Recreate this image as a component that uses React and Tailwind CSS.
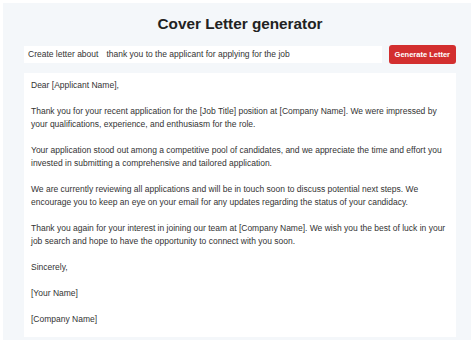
import React from 'react';

const paragraphs = [
    'Dear [Applicant Name],',
    'Thank you for your recent application for the [Job Title] position at [Company Name]. We were impressed by your qualifications, experience, and enthusiasm for the role.',
    'Your application stood out among a competitive pool of candidates, and we appreciate the time and effort you invested in submitting a comprehensive and tailored application.',
    'We are currently reviewing all applications and will be in touch soon to discuss potential next steps. We encourage you to keep an eye on your email for any updates regarding the status of your candidacy.',
    'Thank you again for your interest in joining our team at [Company Name]. We wish you the best of luck in your job search and hope to have the opportunity to connect with you soon.',
    'Sincerely,',
    '[Your Name]',
    '[Company Name]',
];

export default function App() {
    return (
        <div className="w-[474px] h-[342px] bg-white p-[3px] overflow-hidden" style={{ fontFamily: '"Liberation Sans", Arial, sans-serif' }}>
            <div className="h-[337px] bg-[#f4f7fa] pl-[21px] pr-[15px] pt-[11px]">
                <h1 className="text-center text-[15.3px] leading-[20px] font-bold text-[#222]">Cover Letter generator</h1>
                <div className="flex items-center mt-[11px] gap-[7px]">
                    <div className="flex-1 flex items-center h-[17px] bg-white px-[4px] text-[8.5px] text-[#333]">
                        <span>Create letter about</span>
                        <span className="ml-[8px]">thank you to the applicant for applying for the job</span>
                    </div>
                    <button className="h-[19px] px-[6px] rounded-[3px] bg-[#d32f2f] text-white text-[7.5px] font-bold">
                        Generate Letter
                    </button>
                </div>
                <div className="mt-[9px] h-[264px] bg-white px-[7px] pt-[6px] text-[8.5px] leading-[13px] text-[#333]">
                    {paragraphs.map((p, i) => (
                        <p key={i} className="mb-[13px]">{p}</p>
                    ))}
                </div>
            </div>
        </div>
    );
}
